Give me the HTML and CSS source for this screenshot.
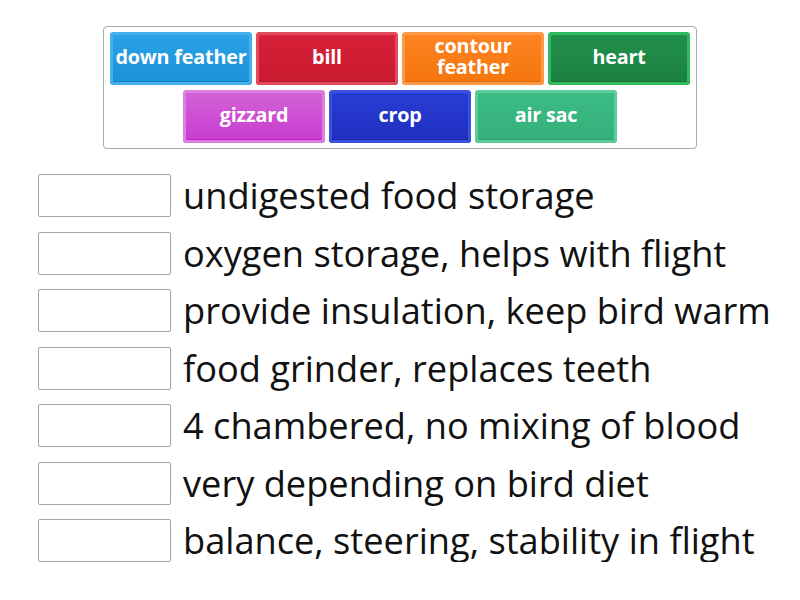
FILE: index.html
```html
<!DOCTYPE html>
<html>
<head>
<meta charset="utf-8">
<link rel="stylesheet" href="styles.css">
</head>
<body>
<div class="bank">
  <div class="tile blue">down feather</div>
  <div class="tile red">bill</div>
  <div class="tile orange two">contour<br>feather</div>
  <div class="tile green">heart</div>
  <div class="tile pink">gizzard</div>
  <div class="tile navy">crop</div>
  <div class="tile teal">air sac</div>
</div>
<div class="list">
  <div class="row"><div class="slot"></div><div class="label">undigested food storage</div></div>
  <div class="row"><div class="slot"></div><div class="label">oxygen storage, helps with flight</div></div>
  <div class="row"><div class="slot"></div><div class="label">provide insulation, keep bird warm</div></div>
  <div class="row"><div class="slot"></div><div class="label">food grinder, replaces teeth</div></div>
  <div class="row"><div class="slot"></div><div class="label">4 chambered, no mixing of blood</div></div>
  <div class="row"><div class="slot"></div><div class="label">very depending on bird diet</div></div>
  <div class="row"><div class="slot"></div><div class="label">balance, steering, stability in flight</div></div>
</div>
</body>
</html>
```
FILE: styles.css
```css
html, body {
  margin: 0;
  padding: 0;
  background: #fff;
  font-family: "Open Sans", "Noto Sans", sans-serif;
}
.bank {
  box-sizing: border-box;
  width: 594px;
  margin: 26px auto 0;
  padding: 5px 6px;
  border: 1px solid #a8a8a8;
  border-radius: 4px;
  display: flex;
  flex-wrap: wrap;
  justify-content: center;
  gap: 5px 4px;
}
.tile {
  box-sizing: border-box;
  width: 142px;
  height: 53px;
  padding-bottom: 5px;
  border-radius: 4px;
  display: flex;
  align-items: center;
  justify-content: center;
  text-align: center;
  color: #fff;
  font-weight: 700;
  font-size: 19.8px;
  line-height: 21px;
  letter-spacing: -0.2px;
}
.tile.two { padding-bottom: 6px; }
.blue {
  background: linear-gradient(#2ba3e8, #1c90d6);
  box-shadow: inset 0 0 0 3px #45b0ee, inset 0 -4px 0 #1580c4;
}
.red {
  background: linear-gradient(#d8213a, #c81a2e);
  box-shadow: inset 0 0 0 3px #e04a5c, inset 0 -4px 0 #b2172a;
}
.orange {
  background: linear-gradient(#fd8424, #f5750c);
  box-shadow: inset 0 0 0 3px #fd9a48, inset 0 -4px 0 #e06a08;
}
.green {
  background: linear-gradient(#22904c, #1c8040);
  box-shadow: inset 0 0 0 3px #30bc5e, inset 0 -4px 0 #1a7038;
}
.pink {
  background: linear-gradient(#d264d6, #c83ad0);
  box-shadow: inset 0 0 0 3px #dc80e0, inset 0 -4px 0 #c020cc;
}
.navy {
  background: linear-gradient(#2a3ed4, #1e2ec0);
  box-shadow: inset 0 0 0 3px #3c50e0, inset 0 -4px 0 #1a28a8;
}
.teal {
  background: linear-gradient(#3dbc86, #34b07a);
  box-shadow: inset 0 0 0 3px #5ccc98, inset 0 -4px 0 #2ea070;
}
.list {
  margin: 25px 0 0 38px;
  display: flex;
  flex-direction: column;
  gap: 14.5px;
}
.row {
  display: flex;
  align-items: center;
  gap: 12px;
}
.slot {
  box-sizing: border-box;
  width: 133px;
  height: 43px;
  border: 1px solid #a4a4a4;
  border-radius: 2px;
  flex: none;
}
.label {
  font-size: 36.2px;
  line-height: 43px;
  color: #111;
  white-space: nowrap;
}
```
